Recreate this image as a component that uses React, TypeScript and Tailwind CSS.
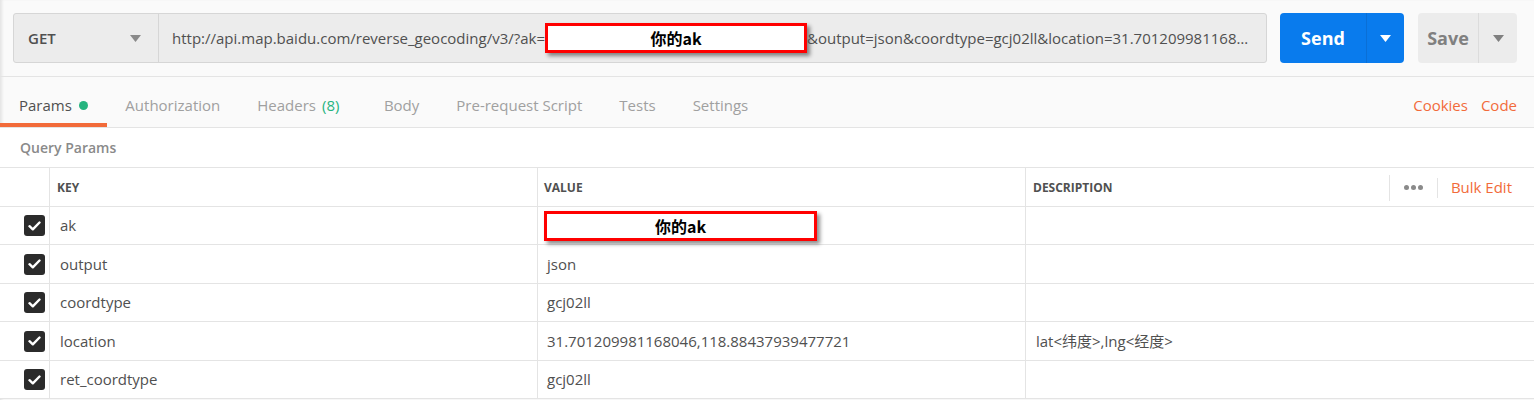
import React from 'react'

const rows = [
  { key: 'ak', value: '', desc: '', h: 'h-[38px]', redact: true },
  { key: 'output', value: 'json', desc: '', h: 'h-[39px]' },
  { key: 'coordtype', value: 'gcj02ll', desc: '', h: 'h-[38px]' },
  { key: 'location', value: '31.701209981168046,118.88437939477721', desc: 'lat<纬度>,lng<经度>', h: 'h-[39px]' },
  { key: 'ret_coordtype', value: 'gcj02ll', desc: '', h: 'h-[38px]' },
]

const tabs = ['Authorization', 'Headers', 'Body', 'Pre-request Script', 'Tests', 'Settings']

const Caret = ({ color }: { color: string }) => (
  <svg width="11" height="7" viewBox="0 0 11 7" aria-hidden="true">
    <path d="M0 0h11L5.5 7z" fill={color} />
  </svg>
)

const YourAk = ({ w }: { w: string }) => (
  <span className={`${w} h-[30px] shrink-0 inline-flex items-center justify-center border-[3px] border-[#ff0000] bg-white shadow-[3px_3px_4px_rgba(0,0,0,0.45)] text-[16px] font-bold text-black [font-family:'Noto_Sans_CJK_SC',sans-serif]`}>
    你的ak
  </span>
)

const Check = () => (
  <div className="w-[21px] h-[21px] rounded-[3px] bg-[#2b2b2b] flex items-center justify-center">
    <svg width="13" height="10" viewBox="0 0 13 10" aria-hidden="true">
      <path d="M1.5 5.2l3.3 3.1L11.5 1.5" stroke="white" strokeWidth="2.4" fill="none" strokeLinecap="round" strokeLinejoin="round" />
    </svg>
  </div>
)

export default function App() {
  return (
    <div className="w-[1534px] h-[400px] overflow-hidden bg-[#fafafa] [font-family:'Open_Sans',sans-serif] shadow-[inset_3px_0_3px_-1px_rgba(0,0,0,0.09)]">
      {/* request bar */}
      <div className="h-[77px] border-b border-[#e4e4e4] flex items-start pt-[13px] pl-[13px] pr-[17px]">
        <div className="flex-1 h-[50px] flex rounded-[3px] border border-[#d6d6d6] bg-[#ececec] min-w-0">
          <div className="w-[145px] shrink-0 flex items-center justify-between pl-[14px] pr-[17px] border-r border-[#d6d6d6]">
            <span className="text-[15px] font-semibold text-[#505050]">GET</span>
            <Caret color="#8a8a8a" />
          </div>
          <div className="flex-1 min-w-0 flex items-center pl-[13px] pr-[16px] text-[15px] text-[#505050] whitespace-nowrap">
            <span className="shrink-0">http://api.map.baidu.com/reverse_geocoding/v3/?ak=</span>
            <YourAk w="w-[262px]" />
            <span className="truncate">&amp;output=json&amp;coordtype=gcj02ll&amp;location=31.701209981168046,118.88437939477721</span>
          </div>
        </div>
        <div className="ml-[13px] h-[50px] flex rounded-[4px] bg-[#097bed]">
          <div className="w-[87px] flex items-center justify-center text-[18px] font-bold text-white border-r border-[#0a6fd6]">Send</div>
          <div className="w-[37px] flex items-center justify-center"><Caret color="white" /></div>
        </div>
        <div className="ml-[14px] h-[50px] flex rounded-[4px] bg-[#ececec]">
          <div className="w-[61px] flex items-center justify-center text-[18px] font-bold text-[#808080] border-r border-[#dcdcdc]">Save</div>
          <div className="w-[38px] flex items-center justify-center"><Caret color="#808080" /></div>
        </div>
      </div>

      {/* tabs */}
      <div className="h-[51px] border-b border-[#e4e4e4] flex items-stretch pr-[17px] text-[15px]">
        <div className="relative flex items-center pt-[6px] px-[19px] text-[#505050]">
          Params
          <span className="ml-[7px] w-[9px] h-[9px] rounded-full bg-[#26b47f]" />
          <span className="absolute left-0 right-0 bottom-0 h-[4px] bg-[#f26b3a]" />
        </div>
        {tabs.map(t => (
          <div key={t} className={`flex items-center pt-[6px] pl-[18.5px] ${t === 'Headers' ? 'pr-[26px]' : 'pr-[18.5px]'} text-[#a0a0a0]`}>
            {t}
            {t === 'Headers' && <span className="ml-[6px] text-[#26b47f]">(8)</span>}
          </div>
        ))}
        <div className="ml-auto flex items-center pt-[6px] gap-[13px] text-[#f26b3a]">
          <span>Cookies</span>
          <span>Code</span>
        </div>
      </div>

      {/* query params */}
      <div className="h-[40px] bg-white border-b border-[#e4e4e4] flex items-center pl-[20px] text-[14px] font-semibold text-[#8a8a8a]">
        Query Params
      </div>

      <div className="bg-white">
        <div className="h-[39px] grid grid-cols-[50px_488px_488px_1fr] border-b border-[#e4e4e4] text-[12px] font-bold text-[#505050]">
          <div className="border-r border-[#e4e4e4]" />
          <div className="border-r border-[#e4e4e4] flex items-center pl-[7px] pt-[1px]">KEY</div>
          <div className="border-r border-[#e4e4e4] flex items-center pl-[6px] pt-[1px]">VALUE</div>
          <div className="flex items-center pl-[7px] pt-[1px]">
            <span>DESCRIPTION</span>
            <div className="ml-auto flex items-center h-full pr-[22px]">
              <span className="h-[26px] border-l border-[#e4e4e4]" />
              <span className="flex gap-[2px] px-[14px]">
                <span className="w-[5px] h-[5px] rounded-full bg-[#8a8a8a]" />
                <span className="w-[5px] h-[5px] rounded-full bg-[#8a8a8a]" />
                <span className="w-[5px] h-[5px] rounded-full bg-[#8a8a8a]" />
              </span>
              <span className="h-[20px] border-l border-[#e4e4e4]" />
              <span className="pl-[13px] text-[15px] font-normal text-[#f26b3a]">Bulk Edit</span>
            </div>
          </div>
        </div>
        {rows.map(r => (
          <div key={r.key} className={`${r.h} grid grid-cols-[50px_488px_488px_1fr] border-b border-[#e4e4e4] text-[15px] text-[#505050]`}>
            <div className="border-r border-[#e4e4e4] flex items-center pl-[24px]"><Check /></div>
            <div className="border-r border-[#e4e4e4] flex items-center pl-[10px]">{r.key}</div>
            <div className={`border-r border-[#e4e4e4] flex items-center ${r.redact ? 'pl-[6px]' : 'pl-[9px]'}`}>
              {r.redact ? <YourAk w="w-[273px]" /> : r.value}
            </div>
            <div className="flex items-center pl-[10px] [font-family:'Open_Sans','Noto_Sans_CJK_SC',sans-serif]">{r.desc}</div>
          </div>
        ))}
      </div>
    </div>
  )
}
